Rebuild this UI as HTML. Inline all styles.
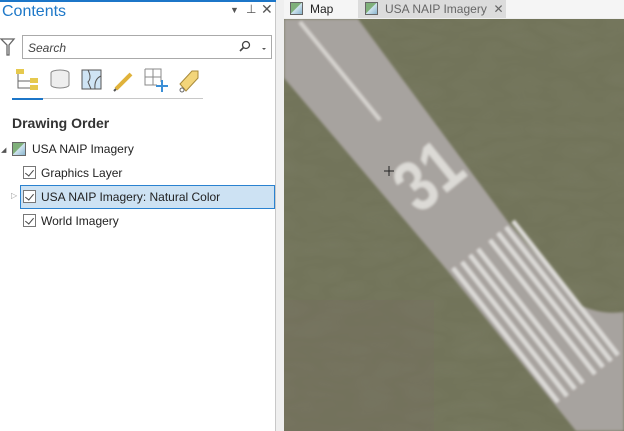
<!DOCTYPE html>
<html><head><style>
*{margin:0;padding:0;box-sizing:border-box}
body{width:624px;height:431px;overflow:hidden;background:#efefef;font-family:"Liberation Sans",sans-serif;position:relative}
.abs{position:absolute}
.t{font-size:12px;color:#222;white-space:nowrap}
.cb{position:absolute;width:13px;height:13px;border:1px solid #777;background:#fff}
.cb:after{content:"";position:absolute;left:3px;top:1px;width:4px;height:7px;border-right:1.3px solid #444;border-bottom:1.3px solid #444;transform:rotate(40deg)}
.li{position:absolute;width:14px;height:14px;border:1px solid #666;background:linear-gradient(135deg,#7fb07a 45%,#cfe3ee 50%,#8ab6ce 100%)}
</style></head><body>
<div class="abs" style="left:0;top:0;width:276px;height:431px;background:#fff;border-right:1px solid #c8c8c8"></div>
<div class="abs" style="left:0;top:0;width:276px;height:2px;background:#1c76c8"></div>
<div class="abs" style="left:2px;top:3px;font-size:16px;color:#1e78c8">Contents</div>
<div class="abs" style="left:230px;top:5px;font-size:9px;color:#555">▼</div>
<div class="abs" style="left:246px;top:2px;font-size:12px;color:#555">⊥</div>
<div class="abs" style="left:261px;top:1px;font-size:14px;color:#555">✕</div>
<svg class="abs" style="left:0;top:38px" width="16" height="18"><path d="M1 1H14L9 7V17H7V7Z" fill="none" stroke="#666" stroke-width="1.3"/></svg>
<div class="abs" style="left:22px;top:35px;width:250px;height:24px;border:1px solid #aaa;background:#fff"></div>
<div class="abs" style="left:28px;top:41px;font-size:12px;font-style:italic;color:#444">Search</div>
<svg class="abs" style="left:238px;top:40px" width="30" height="14"><circle cx="8" cy="5" r="3.5" fill="none" stroke="#444" stroke-width="1.3"/><path d="M5.5 7.5L2 11" stroke="#444" stroke-width="1.6"/><path d="M24 8l2 2l2-2z" fill="#555"/></svg>
<svg class="abs" style="left:12px;top:66px" width="200" height="34">
<rect x="4" y="3" width="8" height="5" fill="#e6c94e"/><path d="M6 8V22H18M6 15H18" stroke="#666" fill="none"/><rect x="18" y="12" width="8" height="5" fill="#e6c94e"/><rect x="18" y="19" width="8" height="5" fill="#e6c94e"/>
<ellipse cx="48" cy="7" rx="9" ry="3" fill="#eee" stroke="#888"/><path d="M39 7V19A9 3 0 0 0 57 19V7" fill="#eee" stroke="#888"/>
<rect x="70" y="4" width="19" height="19" fill="#cfe4f4" stroke="#555"/><path d="M76 4Q80 12 76 16L79 23M83 23Q82 13 89 10" stroke="#555" fill="none"/>
<path d="M104 23L119 8" stroke="#e0b23a" stroke-width="4"/><path d="M102 25l2-2" stroke="#555" stroke-width="2"/>
<path d="M133 3H149V16M133 3V19H145M133 11H149M141 3V19" stroke="#888" fill="none"/><path d="M150 14V26M144 20H156" stroke="#3b8fd6" stroke-width="2"/>
<path d="M168 18L180 5H186V12L174 25Z" fill="#f3d57a" stroke="#a88a3a"/><circle cx="170" cy="24" r="2" fill="none" stroke="#666"/>
<rect x="0" y="32" width="31" height="2" fill="#1c76c8"/><rect x="31" y="32" width="160" height="1" fill="#c8c8c8"/>
</svg>
<div class="abs" style="left:12px;top:115px;font-size:14px;font-weight:bold;color:#333">Drawing Order</div>
<div class="abs" style="left:1px;top:146px;font-size:7px;color:#555">◢</div>
<div class="li" style="left:12px;top:142px"></div>
<div class="abs t" style="left:32px;top:142px">USA NAIP Imagery</div>
<div class="cb" style="left:23px;top:166px"></div>
<div class="abs t" style="left:41px;top:166px">Graphics Layer</div>
<div class="abs" style="left:20px;top:185px;width:255px;height:24px;background:#cde2f3;border:1px solid #2a82d0"></div>
<div class="abs" style="left:11px;top:191px;font-size:8px;color:#999">▷</div>
<div class="cb" style="left:23px;top:190px"></div>
<div class="abs t" style="left:41px;top:190px">USA NAIP Imagery: Natural Color</div>
<div class="cb" style="left:23px;top:214px"></div>
<div class="abs t" style="left:41px;top:214px">World Imagery</div>
<!-- tabs -->
<div class="abs" style="left:284px;top:0;width:340px;height:18px;background:#f5f5f5"></div>
<div class="abs" style="left:358px;top:0;width:148px;height:18px;background:#dcdcdc"></div>
<div class="li" style="left:290px;top:2px;width:13px;height:13px"></div>
<div class="abs t" style="left:310px;top:2px;color:#222">Map</div>
<div class="li" style="left:365px;top:2px;width:13px;height:13px"></div>
<div class="abs t" style="left:385px;top:2px;color:#666">USA NAIP Imagery&nbsp;&nbsp;✕</div>
<!-- map -->
<svg class="abs" style="left:284px;top:19px" width="340" height="412" viewBox="284 19 340 412">
<defs><filter id="b"><feGaussianBlur stdDeviation="1.2"/></filter><filter id="g"><feTurbulence baseFrequency="0.02 0.05" numOctaves="2" seed="3"/><feColorMatrix values="0 0 0 0 0.46 0 0 0 0 0.47 0 0 0 0 0.38 0 0 0 0.15 0"/></filter></defs>
<rect x="284" y="19" width="340" height="412" fill="#72745a"/>
<rect x="284" y="19" width="340" height="412" filter="url(#g)" opacity="0.6"/>
<rect x="284" y="300" width="150" height="131" fill="#776d62" opacity="0.3"/>
<g filter="url(#b)">
<path d="M284 19H358L508 222L580 305Q600 315 624 312V431H576L447 270L284 78Z" fill="#a7a39f"/>
<path d="M300 22L380 120" stroke="#d6d3cf" stroke-width="4"/>
<g stroke="#dcdad7" stroke-width="4.5">
<path d="M453 268L558 402"/><path d="M462 262L567 396"/><path d="M470 255L575 389"/><path d="M478 249L583 383"/>
<path d="M490 240L595 374"/><path d="M498 233L603 367"/><path d="M506 227L611 361"/><path d="M513 221L618 355"/>
</g>
<text x="0" y="0" font-family="Liberation Sans" font-weight="bold" font-size="58" fill="#dcdad6" transform="translate(432,180) rotate(-39) scale(1,1.25)" text-anchor="middle" dominant-baseline="middle">31</text>
</g>
<path d="M384 171H394M389 166V176" stroke="#222" stroke-width="1"/>
</svg>
</body></html>
